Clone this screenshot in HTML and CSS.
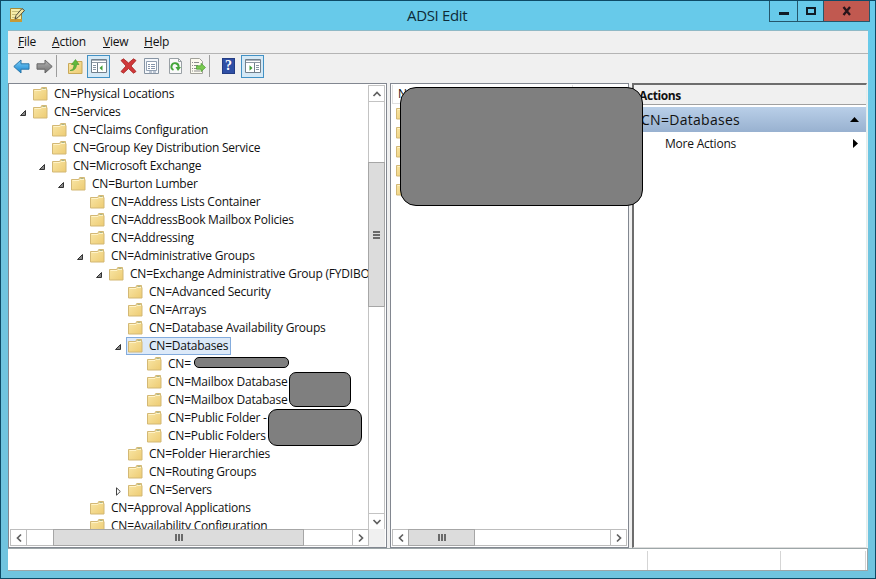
FILE: index.html
```html
<!DOCTYPE html>
<html lang="en">
<head>
    <meta charset="UTF-8">
    <title>ADSI Edit</title>
    <link rel="stylesheet" href="styles.css">
</head>
<body>
    <svg class="defs" width="0" height="0">
        <defs>
            <linearGradient id="folder-fill" x1="0" y1="0" x2="1" y2="1">
                <stop offset="0" stop-color="#f9e7a8"/>
                <stop offset="1" stop-color="#edcb72"/>
            </linearGradient>
            <linearGradient id="blue-fill" x1="0" y1="0" x2="0" y2="1">
                <stop offset="0" stop-color="#7fd0f8"/>
                <stop offset="1" stop-color="#1583cf"/>
            </linearGradient>
            <linearGradient id="grey-fill" x1="0" y1="0" x2="0" y2="1">
                <stop offset="0" stop-color="#b5b5b5"/>
                <stop offset="1" stop-color="#6f6f6f"/>
            </linearGradient>
        </defs>
        <symbol id="folder" viewBox="0 0 15 14">
            <path d="M.5 2.500h7.200l1-2h4.800v2h.5v10.500H.5z" fill="url(#folder-fill)" stroke="#d3b875"/>
            <path d="M9.500 1.500h3" stroke="#a9b58c"/>
            <path d="M1.500 3.500h6.500l1-1h4" fill="none" stroke="#fff3c8"/>
        </symbol>
        <symbol id="chevron" viewBox="0 0 16 16">
            <path d="M4.500 10 8 6.500 11.500 10" fill="none" stroke="#606060" stroke-width="1.7"/>
        </symbol>
    </svg>

    <div class="window">
        <header class="titlebar">
            <svg class="app-icon" width="17" height="17" viewBox="0 0 17 17">
                <path d="M1.500 1.500h11v13h-11z" fill="#f6eda8" stroke="#a58a35"/>
                <path d="M1 12h12v3H1z" fill="#c79a35"/>
                <path d="M3 4.500h7M3 7.500h5M3 10.500h3" stroke="#c5bd7a"/>
                <path d="M6 12l1-3.500L13 1.500l2.500 2L9 10.500z" fill="#f0e3a0" stroke="#4c4a38"/>
            </svg>
            <h1>ADSI Edit</h1>
            <div class="window-buttons">
                <button class="min" aria-label="Minimize"><svg width="12" height="10"><path d="M1 7.500h10" stroke="#101c26" stroke-width="3"/></svg></button>
                <button class="max" aria-label="Maximize"><svg width="12" height="10"><path d="M2 2h8v6H2z" fill="none" stroke="#101c26" stroke-width="2"/></svg></button>
                <button class="close" aria-label="Close"><svg width="12" height="10"><path d="M2.500 1l6.500 8M9 1 2.500 9" stroke="#28141a" stroke-width="2.300"/></svg></button>
            </div>
        </header>

        <nav class="menubar">
            <span class="m-file"><u>F</u>ile</span>
            <span class="m-action"><u>A</u>ction</span>
            <span class="m-view"><u>V</u>iew</span>
            <span><u>H</u>elp</span>
        </nav>

        <div class="toolbar">
            <svg class="tool back" width="17" height="15" viewBox="0 0 17 15"><path d="M.8 7.500 8 1v3.800h8v5.400H8V14z" fill="url(#blue-fill)" stroke="#2b76a8"/></svg>
            <svg class="tool forward" width="17" height="15" viewBox="0 0 17 15"><path d="M16.200 7.500 9 1v3.800H1v5.400h8V14z" fill="url(#grey-fill)" stroke="#666"/></svg>
            <span class="separator"></span>
            <svg class="tool up" width="15" height="15" viewBox="0 0 15 15">
                <path d="M.5 4.500h7l1-2H14v12H.5z" fill="url(#folder-fill)" stroke="#c9a959"/>
                <path d="M2 11.500c3-.5 4-3 4-6H3.500L7.500.5 11 5.500H8.500C8.500 9.500 6 12 2 11.500z" fill="#61b93b" stroke="#41942b" stroke-width=".6"/>
            </svg>
            <span class="toggle">
                <svg width="16" height="14" viewBox="0 0 16 14">
                    <path d="M.5.5h15v13H.5z" fill="#fff" stroke="#72808c"/>
                    <path d="M1 1.500h14" stroke="#a9b2bb"/>
                    <path d="M1 3.500h14" stroke="#8f9aa5"/>
                    <path d="M6.500 4v9" stroke="#72808c"/>
                    <path d="M2 6.500h3M2 8.500h3M2 10.500h3" stroke="#8694a2"/>
                    <path d="M11.500 6.200v5.600L8.500 9z" fill="#43a038"/>
                </svg>
            </span>
            <svg class="tool delete" width="17" height="16" viewBox="0 0 17 16">
                <path d="M1 2.500 3.500.8 8.500 5 13.500.8 16 2.500 11 8l5 5.500-2.500 1.700-5-4.700-5 4.700L1 13.500 6 8z" fill="#d0383a" stroke="#a3221f" stroke-width=".8"/>
            </svg>
            <svg class="tool properties" width="15" height="16" viewBox="0 0 15 16">
                <path d="M.5.5h14v15H.5z" fill="#f4f7fb" stroke="#8794a3"/>
                <path d="M2.500 3.500h10v9h-10z" fill="#fff" stroke="#91a0b2"/>
                <path d="M4 6.500h2M7 6.500h4M4 8.500h2M7 8.500h4M4 10.500h2M7 10.500h4M5 14h3M9 14h3" stroke="#8494aa"/>
            </svg>
            <svg class="tool refresh" width="13" height="16" viewBox="0 0 13 16">
                <path d="M.5.5h9l3 3v12H.5z" fill="#fafafa" stroke="#99a0a5"/>
                <path d="M9.500.5v3h3" fill="none" stroke="#99a0a5"/>
                <path d="M4.500 12A3.600 3.600 0 1 1 9.600 9" fill="none" stroke="#45a63b" stroke-width="1.900"/>
                <path d="M6.500 9h5.500L9 13z" fill="#45a63b"/>
            </svg>
            <svg class="tool export" width="16" height="16" viewBox="0 0 16 16">
                <path d="M.5.500h9l3 3v12H.5z" fill="#fcfaf0" stroke="#a1a19a"/>
                <path d="M2 4.500h1M4 4.500h5M2 7.500h1M4 7.500h4M2 10.500h1M4 10.500h3M2 13h1M4 13h6" stroke="#8c8c8c"/>
                <path d="M6.500 7.800H11V5.300l4.500 4.200-4.500 4.200v-2.500H6.500z" fill="#79c94f" stroke="#4b9b31" stroke-width=".7"/>
            </svg>
            <span class="separator"></span>
            <span class="help">?</span>
            <span class="toggle">
                <svg width="16" height="14" viewBox="0 0 16 14">
                    <path d="M.5.5h15v13H.5z" fill="#fff" stroke="#72808c"/>
                    <path d="M1 1.500h14" stroke="#a9b2bb"/>
                    <path d="M1 3.500h14" stroke="#8f9aa5"/>
                    <path d="M9.500 4v9" stroke="#72808c"/>
                    <path d="M11 6.500h3M11 8.500h3M11 10.500h3" stroke="#8694a2"/>
                    <path d="M4.500 6.200v5.600l3-2.800z" fill="#43a038"/>
                </svg>
            </span>
        </div>

        <main class="panes">
            <section class="pane tree-pane">
                <div class="tree-body">
                    <ul class="tree" id="tree"></ul>
                    <div class="vscroll">
                        <span class="arrow"><svg width="16" height="16"><use href="#chevron"/></svg></span>
                        <span class="thumb"></span>
                        <span class="arrow down"><svg width="16" height="16"><use href="#chevron"/></svg></span>
                    </div>
                </div>
                <div class="scroll-row">
                    <div class="hscroll">
                        <span class="arrow left"><svg width="16" height="16"><use href="#chevron"/></svg></span>
                        <span class="thumb"></span>
                        <span class="arrow right"><svg width="16" height="16"><use href="#chevron"/></svg></span>
                    </div>
                </div>
                <span class="redacted entry"></span>
                <span class="redacted mailbox"></span>
                <span class="redacted folders"></span>
            </section>

            <section class="pane list-pane">
                <div class="list-header"><span>N</span></div>
                <div class="list">
                    <svg width="15" height="14"><use href="#folder"/></svg>
                    <svg width="15" height="14"><use href="#folder"/></svg>
                    <svg width="15" height="14"><use href="#folder"/></svg>
                    <svg width="15" height="14"><use href="#folder"/></svg>
                    <svg width="15" height="14"><use href="#folder"/></svg>
                </div>
                <div class="hscroll">
                    <span class="arrow left"><svg width="16" height="16"><use href="#chevron"/></svg></span>
                    <span class="thumb"></span>
                    <span class="arrow right"><svg width="16" height="16"><use href="#chevron"/></svg></span>
                </div>
                <span class="redacted results"></span>
            </section>

            <aside class="actions">
                <h2>Actions</h2>
                <div class="actions-group">
                    <span>CN=Databases</span>
                    <svg width="9" height="5"><path d="M0 5 4.500 0 9 5z"/></svg>
                </div>
                <div class="actions-item">
                    <span>More Actions</span>
                    <svg width="5" height="9"><path d="M0 0 5 4.500 0 9z"/></svg>
                </div>
            </aside>
        </main>

        <footer class="statusbar">
            <span></span>
            <span></span>
            <span></span>
        </footer>
    </div>

    <script>
        const nodes = [
            { name: "CN=Physical Locations", level: 0 },
            { name: "CN=Services", level: 0, state: "open" },
            { name: "CN=Claims Configuration", level: 1 },
            { name: "CN=Group Key Distribution Service", level: 1 },
            { name: "CN=Microsoft Exchange", level: 1, state: "open" },
            { name: "CN=Burton Lumber", level: 2, state: "open" },
            { name: "CN=Address Lists Container", level: 3 },
            { name: "CN=AddressBook Mailbox Policies", level: 3 },
            { name: "CN=Addressing", level: 3 },
            { name: "CN=Administrative Groups", level: 3, state: "open" },
            { name: "CN=Exchange Administrative Group (FYDIBO", level: 4, state: "open" },
            { name: "CN=Advanced Security", level: 5 },
            { name: "CN=Arrays", level: 5 },
            { name: "CN=Database Availability Groups", level: 5 },
            { name: "CN=Databases", level: 5, state: "open", selected: true },
            { name: "CN=", level: 6 },
            { name: "CN=Mailbox Database", level: 6 },
            { name: "CN=Mailbox Database", level: 6 },
            { name: "CN=Public Folder -", level: 6 },
            { name: "CN=Public Folders", level: 6 },
            { name: "CN=Folder Hierarchies", level: 5 },
            { name: "CN=Routing Groups", level: 5 },
            { name: "CN=Servers", level: 5, state: "closed" },
            { name: "CN=Approval Applications", level: 3 },
            { name: "CN=Availability Configuration", level: 3 }
        ];

        const expanders = {
            open: '<path d="M5.500 1.500v5h-5z" fill="#888" stroke="#333"/>',
            closed: '<path d="M1.500 .8v7.400L5.300 4.500z" fill="#fff" stroke="#444"/>'
        };

        document.getElementById("tree").innerHTML = nodes.map(node => `
            <li style="padding-left: ${node.level * 19}px">
                <svg class="expander" width="8" height="9">${expanders[node.state] || ""}</svg>
                <span class="node${node.selected ? " selected" : ""}">
                    <svg width="15" height="14"><use href="#folder"/></svg>
                    <span>${node.name}</span>
                </span>
            </li>`).join("");
    </script>
</body>
</html>
```
FILE: styles.css
```css
* {
    margin: 0;
    padding: 0;
    box-sizing: border-box;
}

body {
    font-family: "Open Sans", "Noto Sans", sans-serif;
    font-size: 12px;
    letter-spacing: -0.22px;
    color: #111;
    overflow: hidden;
}

svg {
    display: block;
    flex: none;
}

.defs {
    position: absolute;
}

.window {
    width: 876px;
    height: 579px;
    display: flex;
    flex-direction: column;
    background: linear-gradient(#67caea 30px, #70c4df 200px);
    border: 1px solid #0d4a66;
    padding: 0 7px 7px;
}

.titlebar {
    display: flex;
    height: 30px;
    flex: none;
    border-bottom: 1px solid #8fb9c6;
}

.app-icon {
    margin: 6px 0 0 1px;
}

.titlebar h1 {
    flex: 1;
    padding: 4px 0 0 381px;
    font-size: 15px;
    font-weight: 400;
    line-height: 20px;
    letter-spacing: -0.35px;
    color: #0e2a38;
}

.window-buttons {
    display: flex;
    width: 101px;
    height: 21px;
    margin-right: -2px;
    border: 1px solid #24566b;
    border-top: 0;
}

.window-buttons button {
    display: flex;
    align-items: center;
    justify-content: center;
    border: 0;
    background: none;
}

.window-buttons .min {
    width: 27px;
}

.window-buttons .max {
    width: 27px;
    border-left: 1px solid #24566b;
    border-right: 1px solid #24566b;
}

.window-buttons .close {
    flex: 1;
    background: #c15950;
}

.menubar {
    display: flex;
    height: 23px;
    flex: none;
    padding-left: 10px;
    line-height: 22px;
    background: #f0f0f0;
    border-bottom: 1px solid #b4b4b4;
}

.m-file {
    width: 34px;
}

.m-action {
    width: 51px;
}

.m-view {
    width: 41px;
}

.toolbar {
    display: flex;
    align-items: center;
    height: 29px;
    flex: none;
    padding: 0 0 5px 5px;
    background: #f0f0f0;
}

.forward {
    margin-left: 6px;
}

.separator {
    width: 1px;
    height: 22px;
    margin-left: 3px;
    background: #9d9d9d;
}

.up {
    margin-left: 11px;
}

.toggle {
    display: flex;
    align-items: center;
    justify-content: center;
    width: 23px;
    height: 23px;
    margin-left: 4px;
    background: #d5e9f6;
    border: 1px solid #4291c4;
}

.delete {
    margin-left: 10px;
}

.properties {
    margin-left: 7px;
}

.refresh {
    margin-left: 10px;
}

.export {
    margin-left: 8px;
}

.help {
    width: 13px;
    height: 16px;
    margin-left: 12px;
    background: #2f4fa5;
    border: 1px solid #233c83;
    color: #fff;
    font: 700 14px/14px "Liberation Serif", serif;
    text-align: center;
}

.help + .toggle {
    margin-left: 6px;
}

.panes {
    display: flex;
    flex: 1;
    gap: 3px;
    min-height: 0;
    background: #f0f0f0;
}

.pane {
    position: relative;
    display: flex;
    flex-direction: column;
    border: 1px solid #828790;
    background: #fff;
}

.tree-pane {
    width: 379px;
    padding-right: 1px;
}

.tree-body {
    display: flex;
    flex: 1;
    min-height: 0;
}

.tree {
    flex: 1;
    min-width: 0;
    overflow: hidden;
    padding-top: 1px;
    list-style: none;
}

.tree li {
    display: flex;
    align-items: center;
    height: 18px;
}

.expander {
    margin: 3px 0 0 11px;
}

.node {
    display: flex;
    align-items: center;
    height: 18px;
    margin-left: 3px;
    padding: 0 2px 0 1px;
    border: 1px solid transparent;
    line-height: 16px;
    white-space: nowrap;
}

.node span {
    margin-left: 6px;
}

.node.selected {
    background: #dce9f8;
    border-color: #84acdd;
}

.vscroll {
    display: flex;
    flex-direction: column;
    width: 17px;
    margin: 1px 0 0;
    border: 1px solid #c3c3c3;
    border-bottom: 0;
}

.arrow {
    display: flex;
    align-items: center;
    justify-content: center;
    width: 16px;
    height: 16px;
    flex: none;
}

.vscroll .arrow {
    width: 15px;
    border-bottom: 1px solid #c3c3c3;
}

.vscroll .down {
    margin-top: auto;
    border-top: 1px solid #c3c3c3;
    border-bottom: 0;
}

.down svg {
    transform: rotate(180deg);
}

.left svg {
    transform: rotate(-90deg);
}

.right svg {
    transform: rotate(90deg);
}

.thumb {
    border: 1px solid #a6a6a6;
    background: #dcdcdc;
}

.vscroll .thumb {
    width: 17px;
    height: 145px;
    margin: 60px 0 0 -1px;
    background: linear-gradient(#6a6a6a 2px, transparent 2px 3px, #6a6a6a 3px 5px, transparent 5px 6px, #6a6a6a 6px) center / 7px 8px no-repeat #dcdcdc;
}

.scroll-row {
    padding-right: 16px;
    background: linear-gradient(#f0f0f0, #f0f0f0) right / 17px 100% no-repeat;
}

.hscroll {
    display: flex;
    align-items: center;
    height: 17px;
    flex: none;
    margin: 0 0 1px 1px;
    border: 1px solid #bdbdbd;
}

.hscroll .left {
    border-right: 1px solid #bdbdbd;
}

.hscroll .right {
    margin-left: auto;
    border-left: 1px solid #bdbdbd;
}

.hscroll .arrow {
    height: 15px;
}

.hscroll .thumb {
    width: 251px;
    height: 17px;
    margin-left: 26px;
    background: linear-gradient(90deg, #6a6a6a 2px, transparent 2px 3px, #6a6a6a 3px 5px, transparent 5px 6px, #6a6a6a 6px) center / 8px 7px no-repeat #dcdcdc;
}

.list-pane {
    width: 239px;
}

.list-pane .hscroll {
    margin: auto 1px 1px;
}

.list-pane .thumb {
    width: 67px;
    margin-left: -1px;
}

.list-header {
    height: 19px;
    margin: 1px 0 0 1px;
    padding-left: 5px;
    line-height: 18px;
    border: 1px solid #e0e0e0;
    border-width: 0 0 1px 1px;
    background: linear-gradient(#e0e0e0, #e0e0e0) 179px 0 / 1px 18px no-repeat;
}

.list {
    display: flex;
    flex-direction: column;
    gap: 5px;
    padding: 2px 0 0 5px;
}

/* masks over private names */
.redacted {
    position: absolute;
    border: 1px solid #000;
    background: #7f7f7f;
}

.redacted.entry {
    left: 185px;
    top: 273px;
    width: 95px;
    height: 11px;
    border-radius: 5px;
}

.redacted.mailbox {
    left: 280px;
    top: 288px;
    width: 62px;
    height: 35px;
    border-radius: 7px;
}

.redacted.folders {
    left: 259px;
    top: 325px;
    width: 94px;
    height: 37px;
    border-radius: 9px;
}

.redacted.results {
    z-index: 1;
    left: 9px;
    top: 3px;
    width: 243px;
    height: 119px;
    border-radius: 16px;
}

.actions {
    flex: 1;
    margin-right: 1px;
    border: 2px solid #6d6d6d;
    border-right: 1px solid #dfeeee;
    border-bottom: 1px solid #ddd;
    background: #fff;
}

.actions h2 {
    height: 20px;
    padding-left: 5px;
    font-size: 12px;
    line-height: 21px;
    letter-spacing: -0.4px;
    background: #f0f0f0;
    border-bottom: 1px solid #a0a0a0;
}

.actions-group {
    display: flex;
    align-items: center;
    justify-content: space-between;
    height: 25px;
    margin-top: 2px;
    padding: 0 7px;
    font-size: 14px;
    letter-spacing: 0.28px;
    background: linear-gradient(#b9cfe8, #98b1d0);
}

.actions-item {
    display: flex;
    align-items: center;
    justify-content: space-between;
    height: 23px;
    padding: 0 8px 0 31px;
}

.statusbar {
    display: flex;
    height: 23px;
    flex: none;
    padding-top: 2px;
    background: #fff;
    border: solid #9da6a8;
    border-width: 1px 1px 1px 0;
}

.statusbar span {
    width: 133px;
    border-right: 1px solid #d5d5d5;
}

.statusbar span:first-child {
    width: 640px;
}

.statusbar span:last-child {
    width: 85px;
}
```
